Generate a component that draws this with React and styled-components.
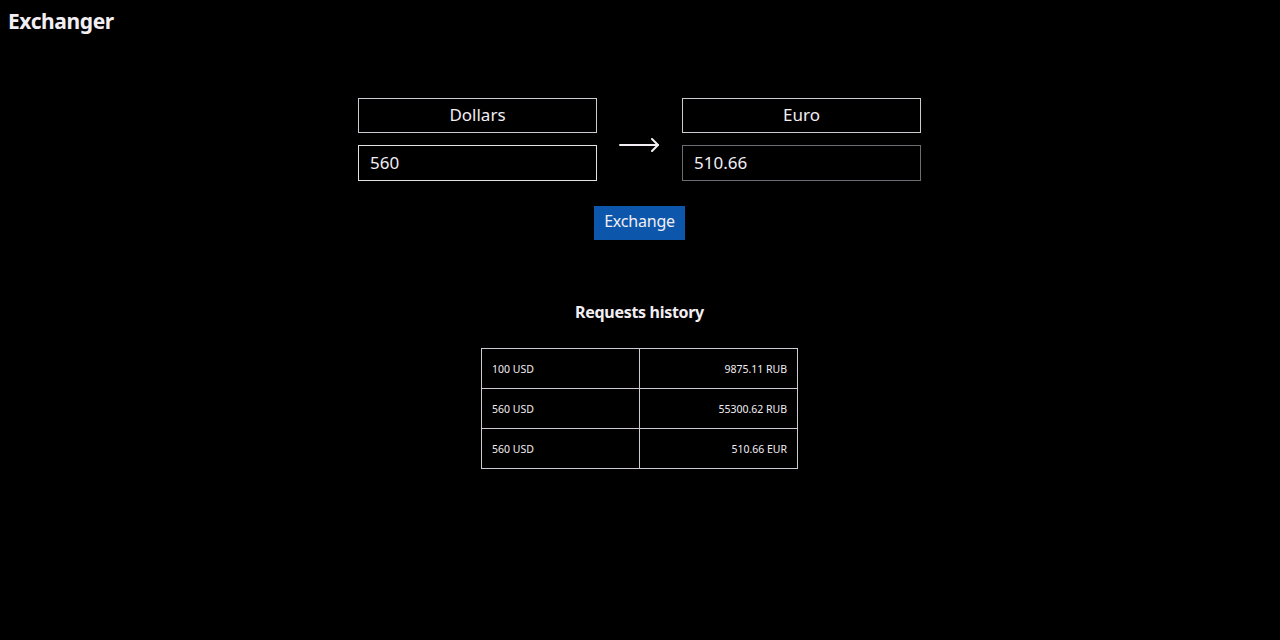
import React from "react";
import styled, { createGlobalStyle } from "styled-components";

const Global = createGlobalStyle`
	html, body {
		margin: 0;
		background: #000;
		color: #f2eef4;
		font-family: "Noto Sans", "Open Sans", sans-serif;
	}
	body {
		padding: 8px 8px 8px 7px;
	}
`;

const Title = styled.h1`
	margin: 0;
	font-size: 21px;
	line-height: 27px;
	font-weight: 700;
	letter-spacing: -0.4px;
	padding-left: 1px;
`;

const Converter = styled.div`
	margin-top: 63px;
	display: flex;
	justify-content: center;
	align-items: flex-start;
	gap: 22px;
`;

const Column = styled.div`
	width: 239px;
	display: flex;
	flex-direction: column;
	gap: 12px;
`;

const Label = styled.div`
	box-sizing: border-box;
	height: 35px;
	border: 1px solid #cfc9d1;
	display: flex;
	align-items: center;
	justify-content: center;
	font-size: 17px;
	padding-bottom: 2px;
`;

const Field = styled.input`
	box-sizing: border-box;
	height: 36px;
	width: 100%;
	padding: 0 11px 2px;
	background: #000;
	color: #f2eef4;
	border: 1px solid ${p => (p.readOnly ? "#6f6b72" : "#e4e0e6")};
	font-family: inherit;
	font-size: 17px;
	outline: none;
`;

const ArrowBox = styled.div`
	width: 41px;
	height: 83px;
	display: flex;
	align-items: center;
	justify-content: center;
	padding-top: 10px;
	box-sizing: border-box;
`;

const Actions = styled.div`
	display: flex;
	justify-content: center;
	margin-top: 25px;
`;

const Button = styled.button`
	height: 34px;
	width: 91px;
	border: none;
	background: #0c56ab;
	color: #f2eef4;
	font-family: inherit;
	font-size: 16px;
	padding: 0 0 4px;
	letter-spacing: -0.2px;
`;

const Subtitle = styled.h2`
	margin: 61px 0 0;
	text-align: center;
	font-size: 16px;
	line-height: 22px;
	font-weight: 700;
	letter-spacing: -0.3px;
`;

const Table = styled.table`
	margin: 25px auto 0;
	width: 317px;
	border-collapse: collapse;
	font-size: 10.5px;
`;

const Cell = styled.td`
	height: 40px;
	width: 50%;
	padding: 0 10px;
	border: 1px solid #cfc9d1;
	text-align: ${p => p.$align || "left"};
	box-sizing: border-box;
`;

const history = [
	["100 USD", "9875.11 RUB"],
	["560 USD", "55300.62 RUB"],
	["560 USD", "510.66 EUR"],
];

function Arrow() {
	return (
		<svg width="41" height="14" viewBox="0 0 41 14" fill="none" stroke="#f2eef4" strokeWidth="2" strokeLinecap="round" strokeLinejoin="round">
			<path d="M1 7h38" />
			<path d="M33 1l6 6-6 6" />
		</svg>
	);
}

export default function App() {
	return (
		<>
			<Global />
			<Title>Exchanger</Title>
			<Converter>
				<Column>
					<Label>Dollars</Label>
					<Field defaultValue="560" />
				</Column>
				<ArrowBox>
					<Arrow />
				</ArrowBox>
				<Column>
					<Label>Euro</Label>
					<Field readOnly defaultValue="510.66" />
				</Column>
			</Converter>
			<Actions>
				<Button>Exchange</Button>
			</Actions>
			<Subtitle>Requests history</Subtitle>
			<Table>
				<tbody>
					{history.map((row, i) => (
						<tr key={i}>
							<Cell>{row[0]}</Cell>
							<Cell $align="right">{row[1]}</Cell>
						</tr>
					))}
				</tbody>
			</Table>
		</>
	);
}
